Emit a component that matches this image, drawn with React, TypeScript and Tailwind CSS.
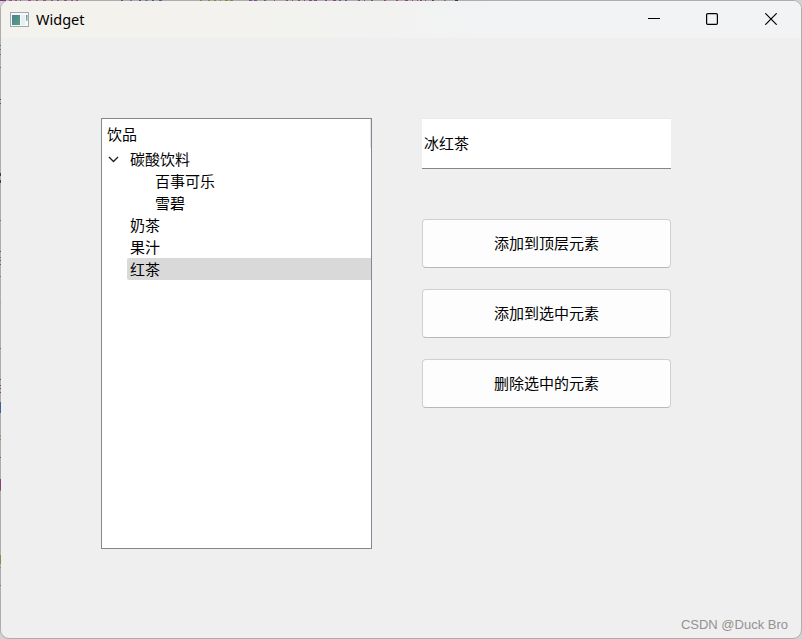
import React from "react";

const cjk = "font-['Noto_Sans','Noto_Sans_CJK_SC',sans-serif]";

const leftSpecks: [number, number, string][] = [
  [45, 1, "#3f7f86"], [49, 1, "#3f7f86"], [54, 1, "#3f7f86"], [67, 1, "#34914a"],
  [99, 1, "#555555"], [100, 2, "#b9b98c"], [103, 1, "#555555"], [173, 3, "#58363c"],
  [180, 3, "#58363c"], [220, 1, "#34914a"], [251, 1, "#8b3f8b"], [257, 1, "#8a6a8a"],
  [260, 1, "#8b3f8b"], [264, 1, "#8b3f8b"], [276, 1, "#777777"], [302, 1, "#a3a35d"],
  [348, 1, "#34914a"], [379, 1, "#8b3f8b"], [385, 1, "#8b3f8b"], [388, 1, "#8b3f8b"],
  [392, 1, "#8b3f8b"], [402, 11, "#3f6296"], [435, 2, "#a99b54"], [439, 1, "#4b9b60"],
  [453, 1, "#c2a46c"], [457, 1, "#49659b"], [479, 11, "#7a4a7e"], [482, 1, "#983545"],
  [490, 1, "#b85b35"], [555, 9, "#8a8950"], [567, 1, "#888888"], [585, 1, "#777777"],
];

const topSpecks: [number, number, string][] = [
  [0, 6, "#7b347b"], [9, 3, "#9c4b8a"], [15, 2, "#9c4b8a"], [20, 1, "#9c4b8a"],
  [28, 3, "#9c4b8a"], [36, 2, "#b13f93"], [43, 3, "#9c4b8a"], [51, 2, "#9c4b8a"],
  [57, 2, "#9c4b8a"], [64, 3, "#9c4b8a"], [71, 2, "#9c4b8a"], [76, 2, "#9c4b8a"],
  [121, 2, "#46599a"], [130, 2, "#6e7797"], [139, 2, "#46599a"], [145, 3, "#6e7797"],
  [152, 2, "#46599a"], [159, 3, "#46599a"], [200, 2, "#8e872f"], [208, 2, "#8e872f"],
  [214, 2, "#8e872f"], [220, 1, "#8e872f"], [225, 3, "#8e872f"], [230, 3, "#8e872f"],
  [249, 3, "#91418c"], [254, 3, "#74529b"], [264, 2, "#91418c"], [274, 1, "#91418c"],
  [286, 2, "#91418c"], [292, 1, "#91418c"], [298, 2, "#91418c"], [304, 1, "#91418c"],
  [309, 3, "#91418c"], [314, 3, "#91418c"], [325, 2, "#91418c"], [333, 3, "#91418c"],
  [339, 2, "#74529b"], [345, 2, "#91418c"], [358, 2, "#91418c"], [364, 1, "#91418c"],
  [371, 2, "#91418c"], [384, 2, "#91418c"], [396, 2, "#91418c"], [405, 3, "#91418c"],
  [412, 1, "#91418c"], [417, 1, "#91418c"], [420, 2, "#91418c"], [425, 1, "#91418c"],
  [432, 2, "#5a4545"], [444, 2, "#a4704a"], [455, 3, "#293957"],
];

function TreeRow({ label, child, expanded, selected }: { label: string; child?: boolean; expanded?: boolean; selected?: boolean }) {
  return (
    <div className="flex h-[22px] items-center">
      <div className="flex w-[25px] shrink-0 pl-[6px]">
        {expanded && (
          <svg width="11" height="8" viewBox="0 0 11 8" fill="none">
            <path d="M1 2 5.5 6.5 10 2" stroke="#222" strokeWidth="1.4" />
          </svg>
        )}
      </div>
      {child && <div className="w-[25px] shrink-0" />}
      <div className={`flex h-[22px] flex-1 items-center pl-[3px] ${selected ? "rounded-l-[2px] bg-[#d9d9d9]" : ""}`}>
        <span className="text-[15px] leading-[22px]">{label}</span>
      </div>
    </div>
  );
}

function PushButton({ label }: { label: string }) {
  return (
    <button className="flex h-[49px] w-[249px] items-center justify-center rounded-[4px] border border-[#d0d0d0] border-b-[#b9b9b9] bg-[#fdfdfd] pb-[2px] text-[15px] leading-[22px] text-black">
      {label}
    </button>
  );
}

export default function App() {
  return (
    <div className={`relative h-[639px] w-[802px] overflow-hidden bg-[#d2d2d2] text-black ${cjk}`}>
      <div className="flex h-[639px] w-[802px] flex-col overflow-hidden rounded-[9px] border border-[#adadad] bg-[#efefef]">
        <header className="flex h-[37px] shrink-0 items-center bg-linear-to-r from-[#f4f2ec] via-[#f2f2f0] via-45% to-[#f1f3f5] to-65%">
          <svg className="mb-px ml-[9px] shrink-0" width="19" height="15" viewBox="0 0 19 15">
            <defs>
              <linearGradient id="pane" x1="0" y1="0" x2="1" y2="1">
                <stop offset="0" stopColor="#4b7e9d" />
                <stop offset="1" stopColor="#54a477" />
              </linearGradient>
              <linearGradient id="side" x1="0" y1="0" x2="0" y2="1">
                <stop offset="0" stopColor="#4c8fb0" />
                <stop offset="1" stopColor="#79c695" />
              </linearGradient>
            </defs>
            <rect x="0.5" y="0.5" width="18" height="14" fill="#f7f9fb" stroke="#a1a7ac" />
            <rect x="2" y="3" width="8" height="10" fill="url(#pane)" />
            <rect x="11" y="3" width="4" height="10" fill="#e9eef3" />
            <rect x="16" y="3" width="1.5" height="6" fill="url(#side)" />
          </svg>
          <span className="ml-[7px] pb-[2px] text-[14.5px] leading-5">Widget</span>
          <div className="mb-px ml-auto flex items-center pr-[24px]">
            <svg width="12" height="12" viewBox="0 0 12 12"><path d="M0 5.5H12" stroke="#000" /></svg>
            <svg className="ml-[46px]" width="12" height="12" viewBox="0 0 12 12" fill="none"><rect x="0.6" y="0.6" width="10.8" height="10.8" rx="1.2" stroke="#000" strokeWidth="1.2" /></svg>
            <svg className="ml-[47px]" width="12" height="12" viewBox="0 0 12 12"><path d="M0.3 0.3 11.7 11.7M11.7 0.3 0.3 11.7" stroke="#000" strokeWidth="1.2" /></svg>
          </div>
        </header>

        <main className="flex flex-1 items-start pl-[100px] pt-[80px]">
          <section className="flex h-[431px] w-[271px] flex-col border border-[#828790] bg-white">
            <div className="flex h-[29px] shrink-0 items-center border-r border-[#e5e5e5] pl-[5px] text-[15px] leading-[22px]">饮品</div>
            <TreeRow label="碳酸饮料" expanded />
            <TreeRow label="百事可乐" child />
            <TreeRow label="雪碧" child />
            <TreeRow label="奶茶" />
            <TreeRow label="果汁" />
            <TreeRow label="红茶" selected />
          </section>

          <section className="ml-[50px] flex w-[249px] flex-col gap-[21px]">
            <div className="mb-[29px] flex h-[51px] items-center border-y border-t-[#e9e9e9] border-b-[#868686] bg-white pb-[2px] pl-[2px] text-[15px] leading-[22px]">
              冰红茶
            </div>
            <PushButton label="添加到顶层元素" />
            <PushButton label="添加到选中元素" />
            <PushButton label="删除选中的元素" />
          </section>
        </main>

        <footer className="flex justify-end pb-[3px] pr-[13px] font-['Liberation_Sans',sans-serif] text-[13px] leading-5 text-[#929292]">
          CSDN @Duck Bro
        </footer>
      </div>

      <svg className="pointer-events-none absolute left-0 top-0" width="802" height="639" viewBox="0 0 802 639" shapeRendering="crispEdges">
        {leftSpecks.map(([y, h, c]) => <rect key={y} x="0" y={y} width="1" height={h} fill={c} />)}
        {topSpecks.map(([x, w, c]) => <rect key={x} x={x} y="0" width={w} height="1" fill={c} />)}
      </svg>
    </div>
  );
}
